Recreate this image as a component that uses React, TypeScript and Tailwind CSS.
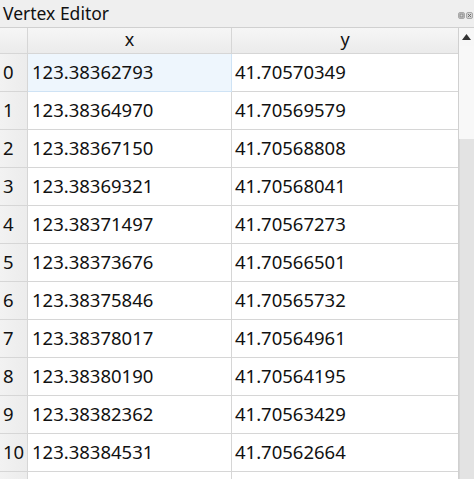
import React from "react";

const rows: [string, string][] = [
  ["123.38362793", "41.70570349"],
  ["123.38364970", "41.70569579"],
  ["123.38367150", "41.70568808"],
  ["123.38369321", "41.70568041"],
  ["123.38371497", "41.70567273"],
  ["123.38373676", "41.70566501"],
  ["123.38375846", "41.70565732"],
  ["123.38378017", "41.70564961"],
  ["123.38380190", "41.70564195"],
  ["123.38382362", "41.70563429"],
  ["123.38384531", "41.70562664"],
  ["", ""],
];

export default function App() {
  return (
    <div
      className="w-[474px] h-[479px] overflow-hidden bg-[#efefef] flex flex-col text-[#111111]"
      style={{ fontFamily: '"Noto Sans", "Open Sans", sans-serif' }}
    >
      <div className="h-[27px] shrink-0 flex items-center justify-between pl-[3px] pr-[1px] bg-[#efefef]">
        <span className="text-[17.5px] leading-none">Vertex Editor</span>
        <div className="flex gap-[1px] items-center mt-[4px]">
          <svg width="7" height="7" viewBox="0 0 7 7">
            <rect x="0.5" y="0.5" width="6" height="6" rx="1.5" fill="#d4d4d4" stroke="#9a9a9a" strokeWidth="0.8" />
            <rect x="2" y="2" width="3" height="3" fill="none" stroke="#777" strokeWidth="0.8" />
          </svg>
          <svg width="7" height="7" viewBox="0 0 7 7">
            <rect x="0.5" y="0.5" width="6" height="6" rx="1.5" fill="#d4d4d4" stroke="#9a9a9a" strokeWidth="0.8" />
            <path d="M2 2 L5 5 M5 2 L2 5" stroke="#666" strokeWidth="0.9" />
          </svg>
        </div>
      </div>
      <div className="flex flex-1 min-h-0 border-t border-[#d0d0d0]">
        <div className="flex-1 flex flex-col min-w-0 bg-white">
          <div className="h-[26px] shrink-0 flex bg-gradient-to-b from-[#f6f6f6] to-[#ebebeb] border-b border-[#d6d6d6] text-[18px]">
            <div className="w-[28px] shrink-0 border-r border-[#d6d6d6]" />
            <div className="w-[204px] shrink-0 border-r border-[#d6d6d6] flex items-center justify-center leading-none pb-[3px]">x</div>
            <div className="flex-1 flex items-center justify-center leading-none pb-[3px]">y</div>
          </div>
          {rows.map(([x, y], i) => (
            <div key={i} className="h-[38px] shrink-0 flex text-[18.5px]">
              <div className="w-[28px] shrink-0 flex items-center pl-[3px] bg-gradient-to-r from-[#f2f2f2] to-[#ececec] border-r border-b border-[#d6d6d6] leading-none">
                {rows[i][0] ? i : ""}
              </div>
              <div
                className={
                  "w-[204px] shrink-0 flex items-center pl-[4px] border-r border-b leading-none " +
                  (i === 0 ? "bg-[#eef6fd] border-[#cfe3f5]" : "border-[#d6d6d6]")
                }
              >
                {x}
              </div>
              <div className="flex-1 flex items-center pl-[3px] border-b border-[#d6d6d6] leading-none">{y}</div>
            </div>
          ))}
        </div>
        <div className="w-[16px] shrink-0 flex flex-col border-l border-[#d0d0d0]">
          <div className="h-[18px] shrink-0 flex items-center justify-center bg-[#f7f7f7]">
            <svg width="9" height="6" viewBox="0 0 9 6">
              <path d="M0 6 L4.5 0 L9 6 Z" fill="#333" />
            </svg>
          </div>
          <div className="h-[93px] shrink-0 bg-[#f8f8f8]" />
          <div className="flex-1 bg-[#e3e3e3] border-l border-[#d6d6d6]" />
        </div>
      </div>
    </div>
  );
}
